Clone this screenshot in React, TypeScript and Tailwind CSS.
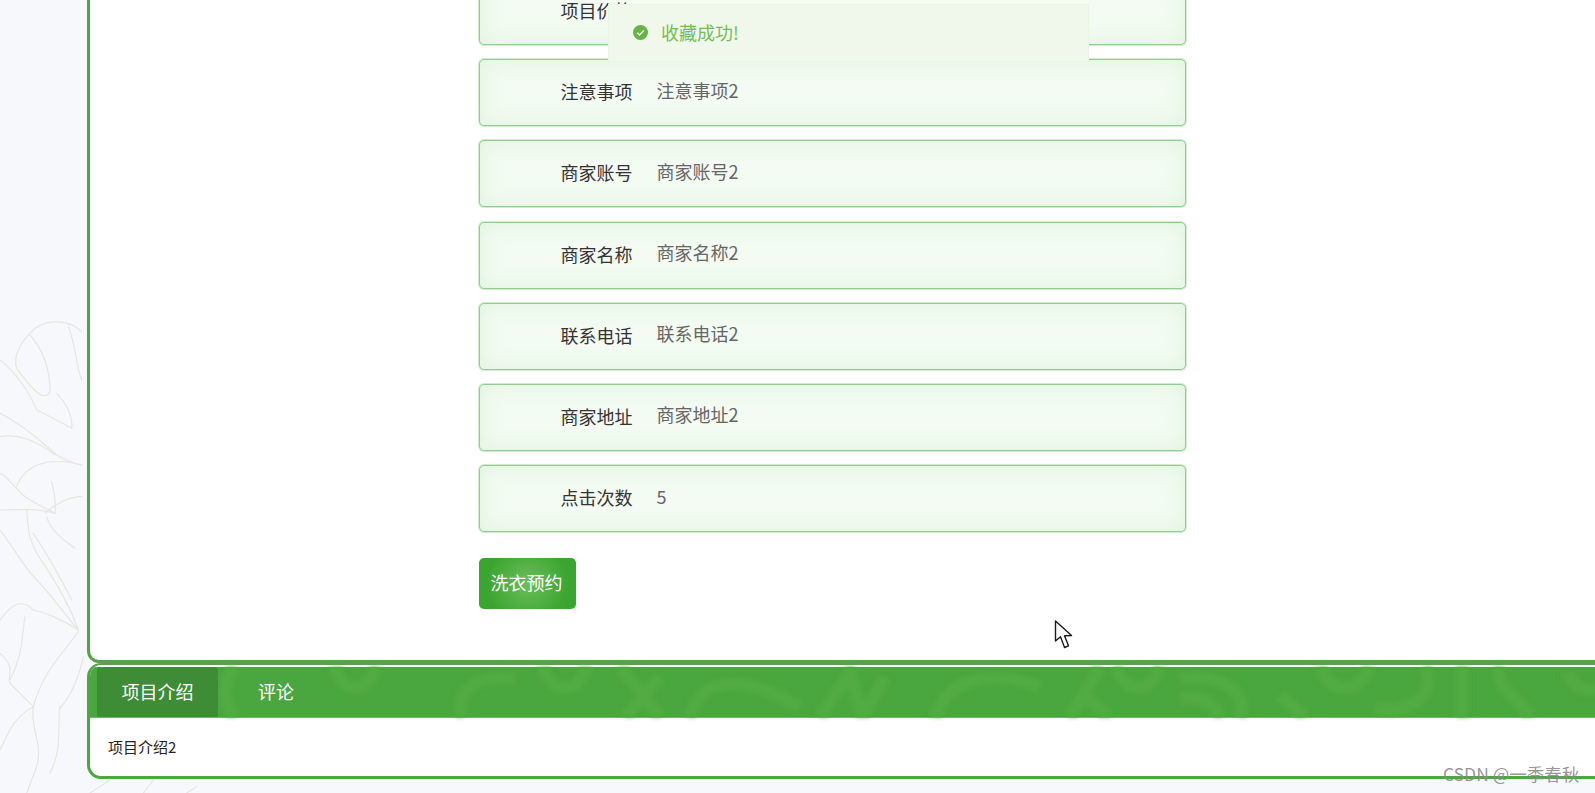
const rows = [
  ["项目价格", "2"],
  ["注意事项", "注意事项2"],
  ["商家账号", "商家账号2"],
  ["商家名称", "商家名称2"],
  ["联系电话", "联系电话2"],
  ["商家地址", "商家地址2"],
  ["点击次数", "5"],
];

function Leaves() {
  const d = [
    "M245 95 C205 55 125 55 90 100 C55 135 40 175 50 205 C90 260 130 310 150 275",
    "M90 105 C130 150 150 210 150 275 M205 80 C230 140 225 190 245 240",
    "M0 180 C50 220 90 280 110 330 C150 350 190 370 215 385 C220 340 190 300 170 280",
    "M0 340 C60 370 120 420 170 465 C195 480 220 490 245 495",
    "M0 410 C50 400 110 420 165 465 M50 560 C75 490 150 470 245 495",
    "M0 520 C20 525 35 555 50 565 C75 600 130 620 165 640 M0 630 L80 628 C120 630 150 635 165 640",
    "M165 640 C170 600 160 570 155 545 M135 640 C165 610 210 590 245 590 M140 650 C150 690 190 720 225 745",
    "M80 630 C85 680 80 720 130 790 C170 850 210 920 235 990",
    "M0 690 C40 740 70 800 110 840 C150 880 200 950 235 990 M100 700 C140 760 180 830 215 900",
    "M0 960 C30 920 60 890 100 930 C130 935 190 960 235 990 M75 950 C65 1010 70 1060 30 1140",
    "M0 1060 C50 1100 20 1130 30 1150 C60 1180 80 1200 100 1220 M235 995 C190 1060 130 1110 100 1220",
    "M100 1220 C90 1290 130 1330 110 1400 L80 1479 M0 1350 C20 1310 40 1250 100 1220 M180 1220 C170 1280 190 1340 150 1420",
    "M250 1070 C235 1140 210 1190 180 1225 M330 1440 L270 1479 M430 1479 L460 1440 M560 1479 L590 1460",
  ];
  return (
    <svg className="absolute left-0 top-[300px]" width="300" height="493" viewBox="0 0 900 1479" fill="none">
      {d.map((p, i) => (
        <path key={i} d={p} stroke="#e9e5dd" strokeWidth="3.5" strokeLinecap="round" />
      ))}
    </svg>
  );
}

function Swirls() {
  const d = [
    "M235 0 C222 15 222 35 235 50",
    "M335 0 C342 28 368 28 376 0",
    "M515 12 C470 5 455 30 462 50",
    "M543 0 C550 28 580 28 586 0",
    "M620 0 L660 50 M625 50 L660 10",
    "M690 50 C700 10 740 5 800 40",
    "M820 50 L850 5 L862 50 L885 10",
    "M935 50 C950 5 1000 5 1040 20",
    "M1070 50 L1100 0 M1085 30 L1110 50",
    "M1116 0 C1125 28 1150 28 1160 0",
    "M1180 12 C1220 5 1250 25 1240 50 M1180 32 C1200 28 1215 35 1220 50",
    "M1280 28 L1305 50",
    "M1320 0 C1330 28 1360 28 1369 0",
    "M1425 0 C1440 30 1400 50 1375 40",
    "M1462 0 L1462 50",
    "M1500 0 C1495 25 1520 30 1530 50",
    "M1568 5 C1575 25 1590 25 1600 22",
  ];
  return (
    <svg className="absolute left-[-90px] top-0 blur-[2px]" width="1700" height="50" fill="none">
      {d.map((p, i) => (
        <path key={i} d={p} stroke="#52ab43" strokeWidth="13" />
      ))}
    </svg>
  );
}

export default function App() {
  return (
    <div className="relative flex h-[793px] w-[1595px] flex-col overflow-hidden bg-[#f6f8fc] pl-[87px] font-['Noto_Sans_CJK_SC',sans-serif]">
      <Leaves />

      <div className="relative mt-[-100px] w-[1700px] shrink-0 rounded-bl-[12px] border-[3px] border-[#4ba83f] border-b-[#5c9f50] bg-white pb-[50.5px] pl-[388.5px] pt-[75px]">
        <div className="flex w-[707px] flex-col gap-[14.2px]">
          {rows.map(([label, value]) => (
            <div
              key={label}
              className="flex h-[67px] items-center rounded-[5px] border border-[#93cc8f] bg-[#f3fbf2] pb-[2px] shadow-[0_0_0_1px_#d3ebd0,inset_0_0_22px_#dff3dd]"
            >
              <span className="w-[153px] text-right text-[18px] text-[#333333]">{label}</span>
              <span className="ml-[24px] pb-[3px] text-[18px] text-[#666666]">{value}</span>
            </div>
          ))}
        </div>
        <button className="mt-[26.3px] flex h-[51px] w-[97px] items-center justify-center rounded-[5px] bg-[radial-gradient(circle,#6cbd5c_0%,#3aa52f_75%)] pb-[3px] pr-[1px] text-[18px] text-white">
          洗衣预约
        </button>
      </div>

      <div className="relative h-[116px] w-[1700px] shrink-0 overflow-hidden rounded-[14px] border-[3px] border-t-2 border-[#4ba83f] border-t-[#5c9f50] bg-white">
        <div className="h-[2px] bg-white" />
        <div className="relative flex h-[51px] border-b border-[#6abc5e] bg-[#4aa63e] pl-[7px]">
          <Swirls />
          <div className="relative flex h-full w-[121px] items-center justify-center rounded-t-[4px] bg-[#3e8c35] text-[18px] text-white">
            项目介绍
          </div>
          <div className="relative ml-[15px] flex h-full items-center px-[25px] text-[18px] text-white">评论</div>
        </div>
        <p className="pl-[18px] pt-[18px] text-[15px] leading-[22px] text-[#222222]">项目介绍2</p>
      </div>

      {/* toast */}
      <div className="absolute left-[608px] top-[4px] flex h-[58px] w-[481px] items-center border border-[#ebf5e4] bg-[#f0f8eb] pb-[2px] pl-[24px]">
        <svg width="15" height="15" viewBox="0 0 16 16">
          <circle cx="8" cy="8" r="8" fill="#67b346" />
          <path d="M4.5 8.2 L7 10.6 L11.5 5.9" fill="none" stroke="#f0f8eb" strokeWidth="1.6" />
        </svg>
        <span className="ml-[13px] text-[18px] text-[#76bc53]">收藏成功!</span>
      </div>

      {/* mouse pointer */}
      <svg className="absolute left-[1054px] top-[620px]" width="20" height="30" viewBox="0 0 20 30" fill="#ffffff" stroke="#1a1a1a" strokeWidth="1.4" strokeLinejoin="round">
        <path d="M1.5 1 L1.5 21 L6.5 16.8 L10.5 27.5 L14.5 25.8 L10.5 15.8 L17.5 15.5 Z" />
      </svg>

      {/* watermark */}
      <span className="absolute left-[1443px] top-[762px] whitespace-nowrap text-[17.5px] leading-[24px] text-[#8a8a8a]/90">
        CSDN @一季春秋
      </span>
    </div>
  );
}
